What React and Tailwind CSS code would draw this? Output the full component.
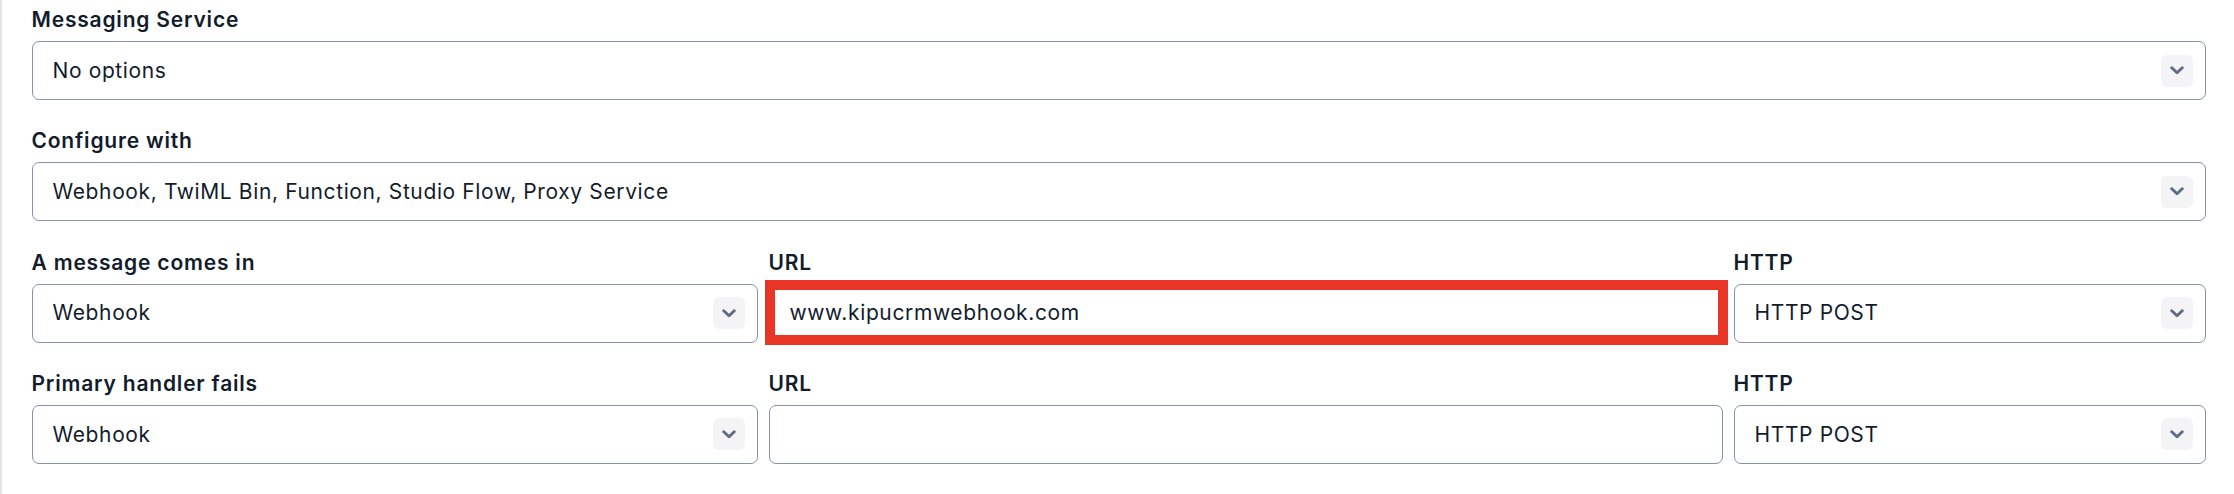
import React from "react";

const font = { fontFamily: "Inter, 'Noto Sans', sans-serif" };

function Chevron() {
  return (
    <svg width="14" height="9" viewBox="0 0 14 9" fill="none">
      <path
        d="M1.75 1.75 L7 6.75 L12.25 1.75"
        stroke="#606b85"
        strokeWidth="3"
        strokeLinecap="round"
        strokeLinejoin="round"
      />
    </svg>
  );
}

function Label({ children }) {
  return (
    <div className="h-[28px] leading-[28px] mb-[7px] text-[21px] tracking-[0.8px] font-semibold text-[#121c2d] whitespace-nowrap">
      {children}
    </div>
  );
}

function Select({ value }) {
  return (
    <div className="h-[59px] flex items-center justify-between rounded-[7px] border-[1.5px] border-[#8891aa] bg-white pl-[20px] pr-[12px]">
      <span className="text-[21px] tracking-[0.62px] text-[#121c2d] whitespace-nowrap">{value}</span>
      <span className="w-[32px] h-[32px] rounded-[6px] bg-[#f4f4f6] flex items-center justify-center">
        <Chevron />
      </span>
    </div>
  );
}

function Input({ value, highlighted }) {
  return (
    <div className="relative h-[59px]">
      <div className="h-full flex items-center rounded-[7px] border-[1.5px] border-[#8891aa] bg-white pl-[20px]">
        <span className="text-[21px] tracking-[0.62px] text-[#121c2d] whitespace-nowrap">{value}</span>
      </div>
      {highlighted && (
        <div className="absolute -left-[4px] -top-[4px] -right-[5px] -bottom-[2px] border-[10px] border-[#e93526]" />
      )}
    </div>
  );
}

export default function App() {
  return (
    <div
      className="w-[2234px] h-[494px] bg-white border-l-[2.5px] border-[#e3e4ea] pl-[29.5px] pr-[28px] pt-[6px] flex flex-col gap-[27.3px]"
      style={font}
    >
      <div>
        <Label>Messaging Service</Label>
        <Select value="No options" />
      </div>
      <div>
        <Label>Configure with</Label>
        <Select value="Webhook, TwiML Bin, Function, Studio Flow, Proxy Service" />
      </div>
      <div className="grid grid-cols-[726px_954px_472px] gap-x-[11px]">
        <div>
          <Label>A message comes in</Label>
          <Select value="Webhook" />
        </div>
        <div>
          <Label>URL</Label>
          <Input value="www.kipucrmwebhook.com" highlighted />
        </div>
        <div>
          <Label>HTTP</Label>
          <Select value="HTTP POST" />
        </div>
      </div>
      <div className="grid grid-cols-[726px_954px_472px] gap-x-[11px]">
        <div>
          <Label>Primary handler fails</Label>
          <Select value="Webhook" />
        </div>
        <div>
          <Label>URL</Label>
          <Input value="" />
        </div>
        <div>
          <Label>HTTP</Label>
          <Select value="HTTP POST" />
        </div>
      </div>
    </div>
  );
}
